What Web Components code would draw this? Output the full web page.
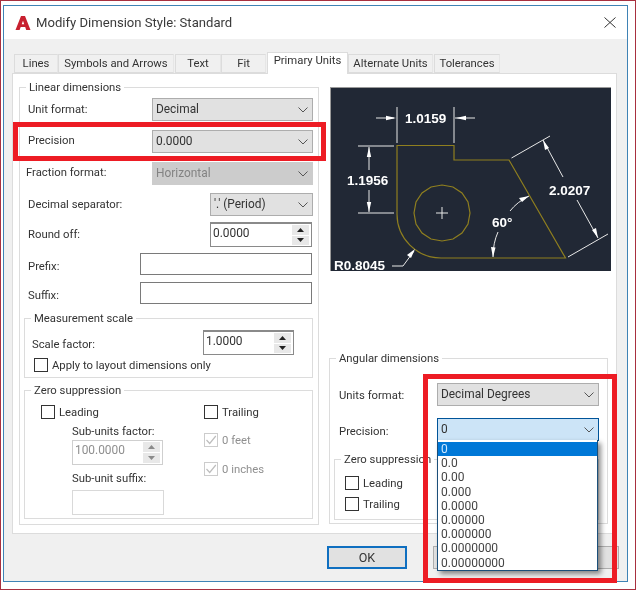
<!DOCTYPE html>
<html>
<head>
<meta charset="utf-8">
<title>Modify Dimension Style</title>
<style>
html,body{margin:0;padding:0;background:#fff;}
body{font-family:Roboto,"Liberation Sans",sans-serif;font-size:11.3px;color:#333;}
</style>
</head>
<body>
<dim-page>
  <dim-window>
    <span slot="title">Modify Dimension Style: Standard</span>
    <dim-tab slot="tabs" style="width:44px">Lines</dim-tab>
    <dim-tab slot="tabs" style="width:116px">Symbols and Arrows</dim-tab>
    <dim-tab slot="tabs" style="width:46px;margin-left:1px">Text</dim-tab>
    <dim-tab slot="tabs" style="width:45px">Fit</dim-tab>
    <dim-tab slot="tabs" active style="width:81px;margin-left:1px">Primary Units</dim-tab>
    <dim-tab slot="tabs" style="width:85px">Alternate Units</dim-tab>
    <dim-tab slot="tabs" style="width:66px;margin-left:1px">Tolerances</dim-tab>

    <div slot="left">
      <dim-group label="Linear dimensions" style="height:445px;--pad:0 5px 0 8px;--padl:8px">
        <dim-row label="Unit format:" style="margin-top:4px"><dim-select style="width:161px">Decimal</dim-select></dim-row>
        <dim-row label="Precision" up="2" style="margin-top:9px"><dim-select style="width:161px">0.0000</dim-select></dim-row>
        <dim-row label="Fraction format:" up="2" style="margin-top:9px;margin-left:-2px"><dim-select disabled style="width:161px">Horizontal</dim-select></dim-row>
        <dim-row label="Decimal separator:" style="margin-top:8px"><dim-select style="width:103px">'.' (Period)</dim-select></dim-row>
        <dim-row label="Round off:" style="margin-top:6px"><dim-spin style="width:102px;margin-right:1px">0.0000</dim-spin></dim-row>
        <dim-row label="Prefix:" down="5" style="margin-top:6px"><dim-input style="width:172px;margin-right:1px"></dim-input></dim-row>
        <dim-row label="Suffix:" down="4" style="margin-top:7px"><dim-input style="width:172px;margin-right:1px"></dim-input></dim-row>

        <dim-group label="Measurement scale" style="height:67px;margin:7px 0 0 -4px;--pad:0 18px 0 7px;--padl:7px">
          <dim-row label="Scale factor:" down="4" style="margin-top:5px"><dim-spin style="width:91px">1.0000</dim-spin></dim-row>
          <dim-check style="margin:3px 0 0 2px">Apply to layout dimensions only</dim-check>
        </dim-group>

        <dim-group label="Zero suppression" style="height:136px;margin:5px 0 0 -4px;--pad:0 0 0 16px;--padl:16px">
          <dim-columns>
            <div slot="a">
              <dim-check style="margin-top:8px">Leading</dim-check>
              <dim-label style="margin:6px 0 0 31px">Sub-units factor:</dim-label>
              <dim-spin disabled style="width:91px;margin:1px 0 0 31px">100.0000</dim-spin>
              <dim-label style="margin:7px 0 0 31px">Sub-unit suffix:</dim-label>
              <dim-input disabled style="width:92px;height:25px;margin:4px 0 0 31px"></dim-input>
            </div>
            <div slot="b">
              <dim-check style="margin-top:8px">Trailing</dim-check>
              <dim-check checked disabled style="margin-top:14px">0 feet</dim-check>
              <dim-check checked disabled style="margin-top:15px">0 inches</dim-check>
            </div>
          </dim-columns>
        </dim-group>
      </dim-group>
    </div>

    <div slot="right">
      <dim-preview style="margin:7px 0 0 1px"></dim-preview>
      <dim-group label="Angular dimensions" style="width:279px;height:173px;margin-top:80px;--pad:0 8px 0 9px;--padl:9px">
        <dim-row label="Units format:" down="2" style="margin-top:18px"><dim-select style="width:162px">Decimal Degrees</dim-select></dim-row>
        <dim-row label="Precision:" down="4" style="margin-top:12px">
          <dim-select focused open style="width:162px">0
            <div slot="items" class="sel">0</div>
            <div slot="items">0.0</div>
            <div slot="items">0.00</div>
            <div slot="items">0.000</div>
            <div slot="items">0.0000</div>
            <div slot="items">0.00000</div>
            <div slot="items">0.000000</div>
            <div slot="items">0.0000000</div>
            <div slot="items">0.00000000</div>
          </dim-select>
        </dim-row>
        <dim-group label="Zero suppression" style="height:68px;margin:11px 0 0 -5px;--pad:0 0 0 10px;--padl:10px">
          <dim-check style="margin-top:10px">Leading</dim-check>
          <dim-check style="margin-top:7px">Trailing</dim-check>
        </dim-group>
      </dim-group>
    </div>

    <dim-button slot="buttons" primary style="width:80px">OK</dim-button>
    <dim-button slot="buttons" style="width:80px;margin-left:26px"></dim-button>
    <dim-button slot="buttons" style="width:99px;margin-left:7px"></dim-button>
  </dim-window>
  <red-box style="left:13px;top:122px;width:313px;height:39px"></red-box>
  <red-box style="left:423px;top:374px;width:194px;height:209px"></red-box>
</dim-page>

<script>
const chevron = `<svg width="10" height="6" viewBox="0 0 10 6"><path d="M0.5 0.5 L5 5 L9.5 0.5" fill="none" stroke="currentColor" stroke-width="1"/></svg>`

class DimPage extends HTMLElement{
    constructor(){
        super()
        this.attachShadow({mode:'open'}).innerHTML = `
        <style>
        :host{display:block;position:relative;box-sizing:border-box;width:636px;height:590px;
              border:1px solid #a8303f;padding:4px 0 0 2px;filter:blur(.3px);}
        </style>
        <slot></slot>`
    }
}

class DimWindow extends HTMLElement{
    constructor(){
        super()
        this.attachShadow({mode:'open'}).innerHTML = `
        <style>
        :host{display:block;box-sizing:border-box;width:625px;height:577px;border:1px solid #3f83b5;background:#f0f0f0;}
        .title{display:flex;align-items:center;height:33px;background:#fff;padding:0 11px;font-size:13.1px;color:#3a3a3a;}
        .title svg.logo{margin-right:5px;}
        .title .name{flex:1;}
        .body{padding:0 8px;}
        .tabs{display:flex;align-items:flex-end;height:34px;padding-left:2px;position:relative;z-index:1;}
        .panel{box-sizing:border-box;width:605px;height:461px;margin-top:0;background:#fff;border:1px solid #dcdcdc;
               padding:6px 0 0 6px;display:flex;gap:10px;}
        .buttons{display:flex;padding:12px 0 0 315px;}
        </style>
        <div class="title">
            <svg class="logo" width="16" height="16" viewBox="0 0 16 16"><path d="M0.5 15 L6 1 H10 L15.5 15 H11.2 L10.2 12 H5.6 L6.6 9.2 H9.2 L8 5.8 L4.6 15 Z" fill="#c8202f"/></svg>
            <span class="name"><slot name="title"></slot></span>
            <svg width="12" height="11" viewBox="0 0 12 11"><path d="M0.5 0.5 L11.5 10.5 M11.5 0.5 L0.5 10.5" stroke="#333" stroke-width="1" fill="none"/></svg>
        </div>
        <div class="body">
            <div class="tabs"><slot name="tabs"></slot></div>
            <div class="panel">
                <div style="width:300px"><slot name="left"></slot></div>
                <div style="width:282px"><slot name="right"></slot></div>
            </div>
            <div class="buttons"><slot name="buttons"></slot></div>
        </div>`
    }
}

class DimTab extends HTMLElement{
    constructor(){
        super()
        const active = this.hasAttribute('active')
        this.attachShadow({mode:'open'}).innerHTML = `
        <style>
        :host{display:block;box-sizing:border-box;height:${active ? 22 : 19}px;margin-bottom:${active ? -1 : 0}px;
              background:${active ? '#fff' : '#f0f0f0'};border:1px solid #dcdcdc;border-bottom:${active ? 0 : 1}px solid #dcdcdc;
              ${active ? '' : 'border-right-color:#e6e6e6;'}
              text-align:center;line-height:${active ? 16 : 17}px;white-space:nowrap;}
        </style>
        <slot></slot>`
    }
}

class DimGroup extends HTMLElement{
    constructor(){
        super()
        this.attachShadow({mode:'open'}).innerHTML = `
        <style>
        :host{display:block;box-sizing:border-box;}
        fieldset{box-sizing:border-box;height:100%;min-width:0;margin:0;border:1px solid #dcdcdc;padding:var(--pad,0);}
        legend{margin-left:calc(6px - var(--padl,0px));padding:0 3px;line-height:16px;height:14px;white-space:nowrap;}
        </style>
        <fieldset>
            <legend>${this.getAttribute('label')}</legend>
            <slot></slot>
        </fieldset>`
    }
}

class DimRow extends HTMLElement{
    constructor(){
        super()
        // label sits a little off centre in the original dialog
        const up = this.getAttribute('up') || 0
        const down = this.getAttribute('down') || 0
        this.attachShadow({mode:'open'}).innerHTML = `
        <style>
        :host{display:flex;justify-content:space-between;align-items:center;}
        </style>
        <span style="padding:${down}px 0 ${up}px">${this.getAttribute('label')}</span>
        <slot></slot>`
    }
}

class DimLabel extends HTMLElement{
    constructor(){
        super()
        this.attachShadow({mode:'open'}).innerHTML = `
        <style>:host{display:block;line-height:14px;white-space:nowrap;}</style>
        <slot></slot>`
    }
}

class DimColumns extends HTMLElement{
    constructor(){
        super()
        this.attachShadow({mode:'open'}).innerHTML = `
        <style>:host{display:grid;grid-template-columns:163px 1fr;}</style>
        <slot name="a"></slot><slot name="b"></slot>`
    }
}

class DimSelect extends HTMLElement{
    constructor(){
        super()
        const open = this.hasAttribute('open')
        let look = 'background:#e1e1e1;border-color:#adadad;color:#333;'
        if(this.hasAttribute('disabled')) look = 'background:#cccccc;border-color:#cccccc;color:#838383;'
        if(this.hasAttribute('focused')) look = 'background:#cce4f7;border-color:#005499;color:#333;'
        this.attachShadow({mode:'open'}).innerHTML = `
        <style>
        :host{display:flex;align-items:center;justify-content:space-between;box-sizing:border-box;height:23px;
              position:relative;border:1px solid;padding:0 4px 0 3px;font-size:11.9px;${look}${open ? 'z-index:5;' : ''}}
        .val{padding-bottom:1px;}
        .chev{display:flex;color:#555;}
        .list{position:absolute;left:-1px;top:21px;width:161px;height:131px;box-sizing:border-box;
              border:1px solid #1b4f7a;border-top:0;background:#fff;box-shadow:3px 3px 5px rgba(0,0,0,.45);
              padding-top:2px;font-size:12px;}
        ::slotted(div){height:14.2px;line-height:15.4px;padding-left:3px;color:#444;}
        ::slotted(.sel){background:#0078d7;color:#cfe8ff;}
        </style>
        <span class="val"><slot></slot></span>
        <span class="chev">${chevron}</span>
        ${open ? '<div class="list"><slot name="items"></slot></div>' : ''}`
    }
}

class DimSpin extends HTMLElement{
    constructor(){
        super()
        const off = this.hasAttribute('disabled')
        const line = off ? '#cfcfcf' : '#8a8a8a'
        const arrow = off ? '#8a8a8a' : '#222'
        this.attachShadow({mode:'open'}).innerHTML = `
        <style>
        :host{display:flex;box-sizing:border-box;height:25px;background:#fff;border:1px solid ${line};
              border-top-width:${off ? 1 : 2}px;padding:1px 2px 1px 2px;font-size:11.9px;color:${off ? '#8f8f8f' : '#333'};}
        .val{flex:1;line-height:17px;}
        .btns{display:flex;flex-direction:column;gap:1px;width:17px;}
        .btns span{flex:1;display:flex;align-items:center;justify-content:center;background:#e8e8e8;}
        </style>
        <span class="val"><slot></slot></span>
        <span class="btns">
            <span><svg width="7" height="4" viewBox="0 0 7 4"><path d="M3.5 0 L7 4 H0 Z" fill="${arrow}"/></svg></span>
            <span><svg width="7" height="4" viewBox="0 0 7 4"><path d="M0 0 H7 L3.5 4 Z" fill="${arrow}"/></svg></span>
        </span>`
    }
}

class DimInput extends HTMLElement{
    constructor(){
        super()
        const off = this.hasAttribute('disabled')
        this.attachShadow({mode:'open'}).innerHTML = `
        <style>
        :host{display:block;box-sizing:border-box;height:22px;background:#fff;border:1px solid ${off ? '#d9d9d9' : '#7a7a7a'};}
        </style>`
    }
}

class DimCheck extends HTMLElement{
    constructor(){
        super()
        const off = this.hasAttribute('disabled')
        const tick = this.hasAttribute('checked')
            ? `<svg width="12" height="12" viewBox="0 0 12 12"><path d="M1.5 6 L4.7 9.5 L10.8 2" fill="none" stroke="#bdbdbd" stroke-width="1.2"/></svg>` : ''
        this.attachShadow({mode:'open'}).innerHTML = `
        <style>
        :host{display:flex;align-items:center;height:14px;white-space:nowrap;color:${off ? '#8f8f8f' : '#333'};}
        .box{box-sizing:border-box;width:14px;height:14px;margin-right:4px;background:#fff;border:1px solid ${off ? '#cccccc' : '#333'};
             display:flex;align-items:center;justify-content:center;}
        </style>
        <span class="box">${tick}</span>
        <span><slot></slot></span>`
    }
}

class DimButton extends HTMLElement{
    constructor(){
        super()
        const main = this.hasAttribute('primary')
        this.attachShadow({mode:'open'}).innerHTML = `
        <style>
        :host{display:flex;align-items:center;justify-content:center;box-sizing:border-box;height:23px;background:#e1e1e1;
              border:${main ? '2px solid #0f6fc0' : '1px solid #adadad'};font-size:12.5px;}
        </style>
        <slot></slot>`
    }
}

class DimPreview extends HTMLElement{
    constructor(){
        super()
        this.attachShadow({mode:'open'}).innerHTML = `
        <style>
        :host{display:block;box-sizing:border-box;width:281px;height:184px;background:#212835;
              border-top:1px solid #9a9a9a;border-left:1px solid #9a9a9a;}
        svg{display:block;overflow:visible;}
        text{font-family:"Liberation Sans",sans-serif;font-weight:bold;font-size:13.5px;fill:#fff;}
        .part{fill:none;stroke:#8f7f1f;stroke-width:1.2;}
        .dim{fill:none;stroke:#e8e8e8;stroke-width:1;}
        .head{fill:#fff;stroke:none;}
        </style>
        <svg width="280" height="183" viewBox="331 88 280 183">
            <path class="part" d="M397 145.5 H454 V160 H509 L565.5 258 H441 A44 44 0 0 1 397 214 Z"/>
            <path class="part" d="M442 185 L453 187 L462 193 L468 202 L470 213 L468 224 L462 233 L453 239 L442 241 L431 239 L422 233 L416 224 L414 213 L416 202 L422 193 L431 187 Z"/>
            <path class="dim" d="M436 213 H448 M442 207 V219"/>

            <path class="dim" d="M397 107 V143 M454 107 V143 M376 118 H394 M455 118 H475"/>
            <path class="head" d="M396 118 L386 115.8 V120.2 Z M456 118 L466 115.8 V120.2 Z"/>
            <text x="405" y="123">1.0159</text>

            <path class="dim" d="M358 146 H394 M358 213 H394 M369 147 V170 M369 190 V212"/>
            <path class="head" d="M369 147 L366.8 157 H371.2 Z M369 212 L366.8 202 H371.2 Z"/>
            <text x="347" y="185">1.1956</text>

            <path class="dim" d="M511.5 158 L550 136 M568 257 L608 234 M543 140 L563 177 M577 200 L598 238"/>
            <path class="head" d="M543 140 L545 150 L549 148 Z M598 238 L596 228 L592 230 Z"/>
            <text x="549" y="195">2.0207</text>

            <path class="dim" d="M529 196 Q517 202 510 211 M493 257 Q493 243 498 232"/>
            <path class="head" d="M529 196 L519 198 L522 202 Z M493 257.5 L491 247 L495.5 247.5 Z"/>
            <text x="492" y="227">60°</text>

            <path class="dim" d="M392 266 H403 L414 251"/>
            <path class="head" d="M415 249 L407 255 L411 258 Z"/>
            <text x="334" y="270">R0.8045</text>
        </svg>`
    }
}

class RedBox extends HTMLElement{
    constructor(){
        super()
        this.attachShadow({mode:'open'}).innerHTML = `
        <style>
        :host{display:block;position:absolute;box-sizing:border-box;border:5px solid #ed1c24;z-index:10;margin:-1px 0 0 -1px;}
        </style>`
    }
}

window.customElements.define('dim-page', DimPage)
window.customElements.define('dim-window', DimWindow)
window.customElements.define('dim-tab', DimTab)
window.customElements.define('dim-group', DimGroup)
window.customElements.define('dim-row', DimRow)
window.customElements.define('dim-label', DimLabel)
window.customElements.define('dim-columns', DimColumns)
window.customElements.define('dim-select', DimSelect)
window.customElements.define('dim-spin', DimSpin)
window.customElements.define('dim-input', DimInput)
window.customElements.define('dim-check', DimCheck)
window.customElements.define('dim-button', DimButton)
window.customElements.define('dim-preview', DimPreview)
window.customElements.define('red-box', RedBox)
</script>
</body>
</html>
